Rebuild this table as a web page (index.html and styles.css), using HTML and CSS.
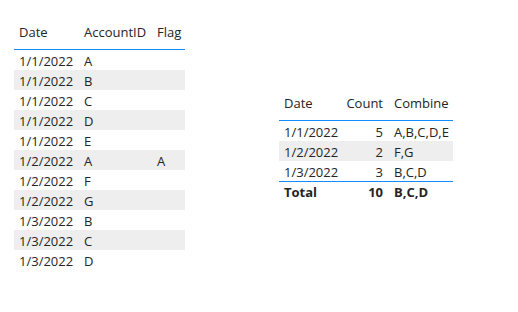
FILE: index.html
```html
<!DOCTYPE html>
<html>
<head>
<meta charset="utf-8">
<link rel="stylesheet" href="styles.css">
</head>
<body>
<div class="page">
  <div class="table t1">
    <div class="row head"><div class="c">Date</div><div class="c">AccountID</div><div class="c">Flag</div></div>
    <div class="row"><div class="c">1/1/2022</div><div class="c">A</div><div class="c"></div></div>
    <div class="row alt"><div class="c">1/1/2022</div><div class="c">B</div><div class="c"></div></div>
    <div class="row"><div class="c">1/1/2022</div><div class="c">C</div><div class="c"></div></div>
    <div class="row alt"><div class="c">1/1/2022</div><div class="c">D</div><div class="c"></div></div>
    <div class="row"><div class="c">1/1/2022</div><div class="c">E</div><div class="c"></div></div>
    <div class="row alt"><div class="c">1/2/2022</div><div class="c">A</div><div class="c">A</div></div>
    <div class="row"><div class="c">1/2/2022</div><div class="c">F</div><div class="c"></div></div>
    <div class="row alt"><div class="c">1/2/2022</div><div class="c">G</div><div class="c"></div></div>
    <div class="row"><div class="c">1/3/2022</div><div class="c">B</div><div class="c"></div></div>
    <div class="row alt"><div class="c">1/3/2022</div><div class="c">C</div><div class="c"></div></div>
    <div class="row"><div class="c">1/3/2022</div><div class="c">D</div><div class="c"></div></div>
  </div>
  <div class="table t2">
    <div class="row head"><div class="c">Date</div><div class="c num">Count</div><div class="c">Combine</div></div>
    <div class="row"><div class="c">1/1/2022</div><div class="c num">5</div><div class="c">A,B,C,D,E</div></div>
    <div class="row alt"><div class="c">1/2/2022</div><div class="c num">2</div><div class="c">F,G</div></div>
    <div class="row"><div class="c">1/3/2022</div><div class="c num">3</div><div class="c">B,C,D</div></div>
    <div class="row total"><div class="c">Total</div><div class="c num">10</div><div class="c">B,C,D</div></div>
  </div>
</div>
</body>
</html>
```

FILE: styles.css
```css
html, body {
  margin: 0;
  padding: 0;
  background: #ffffff;
}
body {
  font-family: "Open Sans", "Noto Sans", sans-serif;
  font-size: 13px;
  color: #252423;
  width: 518px;
  height: 312px;
  overflow: hidden;
}
.page {
  display: flex;
  align-items: flex-start;
  padding-left: 14px;
  padding-top: 21px;
  gap: 94px;
}
.table {
  display: flex;
  flex-direction: column;
}
.row {
  display: grid;
  height: 20px;
  box-sizing: border-box;
}
.t1 .row {
  grid-template-columns: 65px 73px 33px;
}
.t2 {
  margin-top: 71px;
}
.t2 .row {
  grid-template-columns: 64px 46px 64px;
}
.c {
  padding: 3px 0 0 5px;
  line-height: 17px;
  white-space: nowrap;
}
.c.num {
  text-align: right;
  padding-left: 0;
  padding-right: 6px;
}
.row.head {
  height: 29px;
  border-bottom: 1px solid #118dff;
}
.row.alt {
  background: #eeeeee;
}
.row.total {
  border-top: 1px solid #118dff;
  height: 21px;
  font-weight: 700;
}
.row.total .c {
  padding-top: 2px;
}
```
